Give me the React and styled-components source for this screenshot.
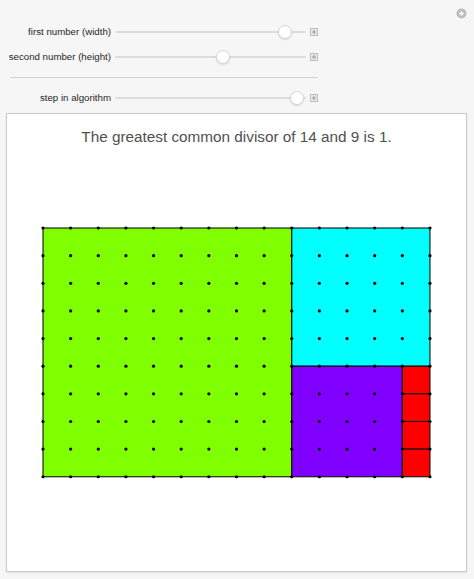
import React from 'react'
import styled, { createGlobalStyle } from 'styled-components'

const GlobalStyle = createGlobalStyle`
  html, body {
    margin: 0;
    padding: 0;
    background: #f6f6f6;
  }
  body {
    font-family: "Liberation Sans", Arial, sans-serif;
  }
`

const Page = styled.div`
  width: 474px;
  height: 579px;
  display: flex;
  flex-direction: column;
  overflow: hidden;
`

const Top = styled.div`
  display: flex;
  padding-top: 8px;
`

const Controls = styled.div`
  display: flex;
  flex-direction: column;
  width: 318px;
  margin-top: 11px;
  padding-left: 6px;
  box-sizing: border-box;
`

const Row = styled.div`
  display: flex;
  align-items: center;
  height: 25px;
`

const Label = styled.div`
  width: 105px;
  text-align: right;
  font-size: 9.7px;
  color: #262626;
  white-space: nowrap;
`

const Track = styled.div`
  position: relative;
  width: 191px;
  height: 14px;
  margin-left: 4px;
  &::before {
    content: '';
    position: absolute;
    left: 0;
    right: 0;
    top: 6px;
    height: 2px;
    border-radius: 1px;
    background: #dcdcdc;
  }
`

const Thumb = styled.div`
  position: absolute;
  top: 0;
  width: 14px;
  height: 14px;
  box-sizing: border-box;
  border-radius: 50%;
  background: #ffffff;
  border: 1px solid #d6d6d6;
  box-shadow: 0 1px 1.5px rgba(0, 0, 0, 0.12);
`

const PlusIcon = styled.svg`
  display: block;
  margin-left: 4px;
`

const Separator = styled.div`
  height: 1px;
  background: #d2d2d2;
  margin: 8px 0 7px 4px;
`

const CloseIcon = styled.svg`
  display: block;
  margin-left: auto;
  margin-right: 7px;
`

const Panel = styled.div`
  margin: 3px 7px 0 6px;
  height: 459px;
  box-sizing: border-box;
  background: #ffffff;
  border: 1px solid #c9c9c9;
  box-shadow: 0 1px 2px rgba(0, 0, 0, 0.08);
  display: flex;
  flex-direction: column;
  align-items: center;
`

const Title = styled.div`
  margin-top: 14px;
  font-size: 15.3px;
  line-height: 18px;
  color: #505050;
`

const Chart = styled.svg`
  display: block;
  margin-top: 80px;
`

const sliders = [
  { label: 'first number (width)', pos: 170 },
  { label: 'second number (height)', pos: 108 },
]

const U = 27.64
const PAD = 2
const COLS = 14
const ROWS = 9

const squares = [
  { x: 0, y: 0, s: 9, fill: '#80ff00' },
  { x: 9, y: 0, s: 5, fill: '#00ffff' },
  { x: 9, y: 5, s: 4, fill: '#8000ff' },
  { x: 13, y: 5, s: 1, fill: '#ff0000' },
  { x: 13, y: 6, s: 1, fill: '#ff0000' },
  { x: 13, y: 7, s: 1, fill: '#ff0000' },
  { x: 13, y: 8, s: 1, fill: '#ff0000' },
]

const Plus = () => (
  <PlusIcon width="8" height="8" viewBox="0 0 8 8">
    <rect x="0.5" y="0.5" width="7" height="7" fill="#e9e9e9" stroke="#bdbdbd" />
    <path d="M2 4h4M4 2v4" stroke="#9c9c9c" strokeWidth="1" />
  </PlusIcon>
)

const Slider = ({ label, pos }) => (
  <Row>
    <Label>{label}</Label>
    <Track>
      <Thumb style={{ left: pos - 7 }} />
    </Track>
    <Plus />
  </Row>
)

const GcdChart = () => {
  const dots = []
  for (let i = 0; i <= COLS; i++) {
    for (let j = 0; j <= ROWS; j++) {
      dots.push(
        <circle key={`${i}-${j}`} cx={PAD + i * U} cy={PAD + j * U} r={1.6} fill="#000" />
      )
    }
  }
  return (
    <Chart width={COLS * U + PAD * 2} height={ROWS * U + PAD * 2}>
      {squares.map((q, k) => (
        <rect
          key={k}
          x={PAD + q.x * U}
          y={PAD + q.y * U}
          width={q.s * U}
          height={q.s * U}
          fill={q.fill}
          stroke="#111"
          strokeWidth={1.1}
        />
      ))}
      {dots}
    </Chart>
  )
}

export default function App() {
  return (
    <Page>
      <GlobalStyle />
      <Top>
        <Controls>
          {sliders.map((s) => (
            <Slider key={s.label} {...s} />
          ))}
          <Separator />
          <Slider label="step in algorithm" pos={182} />
        </Controls>
        <CloseIcon width="11" height="11" viewBox="0 0 11 11">
          <circle cx="5.5" cy="5.5" r="5" fill="#bcbcbc" />
          <path d="M3.3 5.5h4.4M5.5 3.3v4.4" stroke="#ffffff" strokeWidth="1.4" />
        </CloseIcon>
      </Top>
      <Panel>
        <Title>The greatest common divisor of 14 and 9 is 1.</Title>
        <GcdChart />
      </Panel>
    </Page>
  )
}
